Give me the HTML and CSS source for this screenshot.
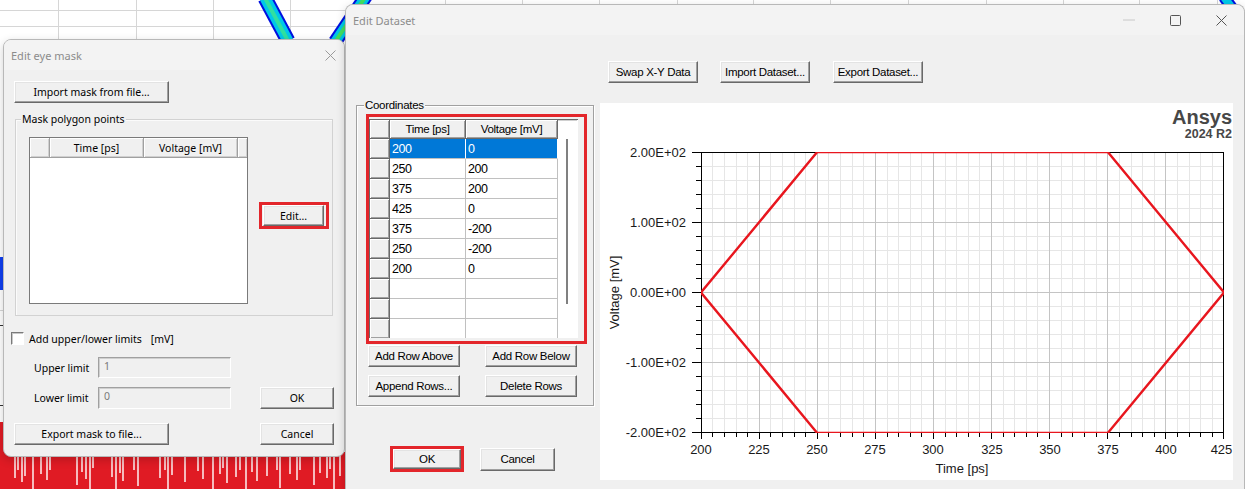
FILE: index.html
```html
<!DOCTYPE html>
<html>
<head>
<meta charset="utf-8">
<link rel="stylesheet" href="styles.css">
</head>
<body>
<svg class="desk" width="1245" height="489" viewBox="0 0 1245 489">
  <rect width="1245" height="489" fill="#ffffff"/>
  <g stroke="#d6d6d6" stroke-width="1">
    <path d="M58.5 0V489M136.5 0V489M213.5 0V489M290.5 0V489M368.5 0V489M445.5 0V489M522.5 0V489M599.5 0V489M677.5 0V489M753.5 0V489M830.5 0V489M908.5 0V489M986.5 0V489M1063.5 0V489M1139.5 0V489M1217.5 0V489"/>
    <path d="M0 10.5H1245M0 26.5H1245M0 310.5H10"/>
  </g>
  <path d="M0 325.5H4M0 405.5H4" stroke="#333" stroke-width="1"/>
  <rect x="0" y="257" width="4" height="33" fill="#1040f0"/>
  <g stroke-linecap="butt">
    <line x1="265" y1="-2" x2="288" y2="41" stroke="#0010e0" stroke-width="15"/>
    <line x1="265" y1="-2" x2="288" y2="41" stroke="#00c8e8" stroke-width="11"/>
    <line x1="265" y1="-2" x2="288" y2="41" stroke="#30e0a0" stroke-width="4"/>
    <line x1="335" y1="42" x2="366" y2="-4" stroke="#0010e0" stroke-width="14"/>
    <line x1="335" y1="42" x2="366" y2="-4" stroke="#00c8e8" stroke-width="10"/>
    <line x1="335" y1="42" x2="366" y2="-4" stroke="#40e060" stroke-width="4"/>
    <line x1="1224" y1="-3" x2="1232" y2="8" stroke="#0010e0" stroke-width="12"/>
    <line x1="1224" y1="-3" x2="1232" y2="8" stroke="#00c8e8" stroke-width="8"/>
  </g>
  <rect x="0" y="422" width="5" height="67" fill="#e01b24"/>
  <rect x="0" y="452" width="350" height="37" fill="#e01b24"/>
  <g stroke="#ffffff" stroke-width="1.4">
    <path d="M15 452V478M18 452V470M22 452V482M25 452V476M33 452V489M41 452V474M47 452V480M50 452V470M77 452V485M82 452V472M86 452V479M90 452V489M93 452V468M112 452V477M116 452V489M120 452V473M123 452V481M134 452V470M138 452V486M160 452V478M165 452V470M168 452V489M172 452V475M185 452V482M198 452V471M203 452V479M213 452V489M220 452V474M223 452V468M227 452V483M236 452V477M240 452V470M246 452V489M252 452V472M257 452V481M267 452V476M277 452V470M280 452V488M290 452V474M297 452V480M300 452V470M314 452V485M320 452V473M327 452V478M330 452V469M334 452V489M340 452V476"/>
  </g>
</svg>

<section class="win win-mask">
  <header class="titlebar">
    <span class="title">Edit eye mask</span>
    <svg class="close-x" width="11" height="11" viewBox="0 0 11 11"><path d="M0.5 0.5L10.5 10.5M10.5 0.5L0.5 10.5" stroke="#9a9a9a" stroke-width="1"/></svg>
  </header>
  <div class="mask-body">
    <button class="btn btn-import">Import mask from file...</button>
    <div class="group group-mask">
      <span class="group-label">Mask polygon points</span>
      <div class="mask-row">
        <div class="mask-table">
          <div class="mt-head">
            <span class="hc hc-corner"></span>
            <span class="hc hc-time">Time [ps]</span>
            <span class="hc hc-volt">Voltage [mV]</span>
            <span class="hc hc-blank"></span>
          </div>
        </div>
        <div class="redbox edit-box"><button class="btn btn-edit">Edit...</button></div>
      </div>
    </div>
    <div class="check-row">
      <span class="checkbox"></span>
      <span class="check-text">Add upper/lower limits</span>
      <span class="unit">[mV]</span>
    </div>
    <div class="limit-row limit-upper">
      <span class="lim-label">Upper limit</span>
      <span class="input">1</span>
    </div>
    <div class="limit-row limit-lower">
      <span class="lim-label">Lower limit</span>
      <span class="input">0</span>
      <button class="btn btn-ok">OK</button>
    </div>
    <div class="foot-row">
      <button class="btn btn-export">Export mask to file...</button>
      <button class="btn btn-cancel">Cancel</button>
    </div>
  </div>
</section>

<section class="win win-ds">
  <header class="titlebar">
    <span class="title">Edit Dataset</span>
    <div class="controls">
      <span class="ctl"><svg width="12" height="2" viewBox="0 0 12 2"><path d="M0 1H12" stroke="#c8c8c8" stroke-width="1"/></svg></span>
      <span class="ctl"><svg width="11" height="11" viewBox="0 0 11 11"><rect x="0.5" y="0.5" width="10" height="10" rx="1" fill="none" stroke="#555" stroke-width="1"/></svg></span>
      <span class="ctl"><svg width="11" height="11" viewBox="0 0 11 11"><path d="M0.5 0.5L10.5 10.5M10.5 0.5L0.5 10.5" stroke="#555" stroke-width="1"/></svg></span>
    </div>
  </header>
  <div class="ds-body">
    <div class="toolbar">
      <button class="btn dbtn btn-swap">Swap X-Y Data</button>
      <button class="btn dbtn btn-imp">Import Dataset...</button>
      <button class="btn dbtn btn-exp">Export Dataset...</button>
    </div>
    <div class="ds-main">
      <div class="ds-left">
        <div class="group group-coord">
          <span class="group-label">Coordinates</span>
          <div class="redbox table-box">
            <div class="grid">
              <span class="rh head"></span>
              <span class="ch">Time [ps]</span>
              <span class="ch">Voltage [mV]</span>
              <span class="scroll-col"></span>

              <span class="rh"></span><span class="cell sel">200</span><span class="cell sel">0</span>
              <span class="rh"></span><span class="cell">250</span><span class="cell">200</span>
              <span class="rh"></span><span class="cell">375</span><span class="cell">200</span>
              <span class="rh"></span><span class="cell">425</span><span class="cell">0</span>
              <span class="rh"></span><span class="cell">375</span><span class="cell">-200</span>
              <span class="rh"></span><span class="cell">250</span><span class="cell">-200</span>
              <span class="rh"></span><span class="cell">200</span><span class="cell">0</span>
              <span class="rh"></span><span class="cell"></span><span class="cell"></span>
              <span class="rh"></span><span class="cell"></span><span class="cell"></span>
              <span class="rh"></span><span class="cell"></span><span class="cell"></span>
            </div>
          </div>
          <div class="row-btns">
            <button class="btn dbtn rb-a">Add Row Above</button>
            <button class="btn dbtn rb-b">Add Row Below</button>
          </div>
          <div class="row-btns row-btns2">
            <button class="btn dbtn rb-a">Append Rows...</button>
            <button class="btn dbtn rb-b">Delete Rows</button>
          </div>
        </div>
        <div class="ok-row">
          <div class="redbox ok-box"><button class="btn dbtn btn-dok">OK</button></div>
          <button class="btn dbtn btn-dcancel">Cancel</button>
        </div>
      </div>
      <div class="chart">
        <svg width="633" height="377" viewBox="0 0 633 377" class="chart-svg">
          <defs>
            <clipPath id="plotclip"><rect x="101" y="49" width="523" height="281"/></clipPath>
          </defs>
          <path stroke="#e6e6e6" stroke-width="1" fill="none" d="M112.5 49V330M124.5 49V330M136.5 49V330M147.5 49V330M170.5 49V330M182.5 49V330M194.5 49V330M205.5 49V330M228.5 49V330M240.5 49V330M252.5 49V330M263.5 49V330M287.5 49V330M298.5 49V330M310.5 49V330M321.5 49V330M345.5 49V330M356.5 49V330M368.5 49V330M379.5 49V330M403.5 49V330M414.5 49V330M426.5 49V330M437.5 49V330M461.5 49V330M472.5 49V330M484.5 49V330M496.5 49V330M519.5 49V330M531.5 49V330M542.5 49V330M554.5 49V330M577.5 49V330M589.5 49V330M600.5 49V330M612.5 49V330M101 63.5H624M101 77.5H624M101 91.5H624M101 105.5H624M101 133.5H624M101 147.5H624M101 161.5H624M101 175.5H624M101 203.5H624M101 217.5H624M101 231.5H624M101 245.5H624M101 273.5H624M101 287.5H624M101 301.5H624M101 315.5H624"/>
          <path stroke="#c4c4c4" stroke-width="1" fill="none" d="M159.5 49V330M217.5 49V330M275.5 49V330M333.5 49V330M391.5 49V330M449.5 49V330M507.5 49V330M565.5 49V330M101 119.5H624M101 189.5H624M101 259.5H624"/>
          <rect x="101.5" y="49.5" width="522" height="280" fill="none" stroke="#000" stroke-width="1"/>
          <polyline clip-path="url(#plotclip)" fill="none" stroke="#e8161e" stroke-width="2.4" stroke-linejoin="miter" points="101,189.5 217.2,49 507.8,49 624,189.5 507.8,330 217.2,330 101,189.5"/>
          <path stroke="#000" stroke-width="1" fill="none" d="M96 63.5H101M96 77.5H101M96 91.5H101M96 105.5H101M96 133.5H101M96 147.5H101M96 161.5H101M96 175.5H101M96 203.5H101M96 217.5H101M96 231.5H101M96 245.5H101M96 273.5H101M96 287.5H101M96 301.5H101M96 315.5H101M92 49.5H101M92 119.5H101M92 189.5H101M92 259.5H101M92 329.5H101"/>
          <path stroke="#000" stroke-width="1" fill="none" d="M112.5 330V334M124.5 330V334M136.5 330V334M147.5 330V334M170.5 330V334M182.5 330V334M194.5 330V334M205.5 330V334M228.5 330V334M240.5 330V334M252.5 330V334M263.5 330V334M287.5 330V334M298.5 330V334M310.5 330V334M321.5 330V334M345.5 330V334M356.5 330V334M368.5 330V334M379.5 330V334M403.5 330V334M414.5 330V334M426.5 330V334M437.5 330V334M461.5 330V334M472.5 330V334M484.5 330V334M496.5 330V334M519.5 330V334M531.5 330V334M542.5 330V334M554.5 330V334M577.5 330V334M589.5 330V334M600.5 330V334M612.5 330V334M101.5 330V336M159.5 330V336M217.5 330V336M275.5 330V336M333.5 330V336M391.5 330V336M449.5 330V336M507.5 330V336M565.5 330V336M623.5 330V336"/>
          <g class="ax-text" text-anchor="end">
            <text x="86" y="54">2.00E+02</text>
            <text x="86" y="124">1.00E+02</text>
            <text x="86" y="194">0.00E+00</text>
            <text x="86" y="264">-1.00E+02</text>
            <text x="86" y="334">-2.00E+02</text>
          </g>
          <g class="ax-text" text-anchor="middle">
            <text x="101" y="351">200</text>
            <text x="159" y="351">225</text>
            <text x="217" y="351">250</text>
            <text x="275" y="351">275</text>
            <text x="333" y="351">300</text>
            <text x="392" y="351">325</text>
            <text x="450" y="351">350</text>
            <text x="508" y="351">375</text>
            <text x="566" y="351">400</text>
            <text x="621.5" y="351">425</text>
            <text x="362" y="370">Time [ps]</text>
            <text x="0" y="0" transform="translate(19 189.5) rotate(-90)">Voltage [mV]</text>
          </g>
          <text class="brand" x="632" y="21" text-anchor="end">Ansys</text>
          <text class="brand-sub" x="632" y="35" text-anchor="end">2024 R2</text>
        </svg>
      </div>
    </div>
  </div>
</section>
</body>
</html>
```

FILE: styles.css
```css
html, body {
  margin: 0;
  padding: 0;
}
body {
  width: 1245px;
  height: 489px;
  overflow: hidden;
  position: relative;
  background: #ffffff;
}
.desk {
  position: absolute;
  left: 0;
  top: 0;
  display: block;
}

/* windows */
.win {
  position: absolute;
  box-sizing: border-box;
  border: 1px solid #b8b8b8;
  border-radius: 8px;
  background: #f0f0f0;
  overflow: hidden;
  box-shadow: 0 3px 10px rgba(0, 0, 0, 0.18);
}
.win-mask {
  left: 3px;
  top: 39px;
  width: 342px;
  height: 418px;
  font-family: "Noto Sans", "Open Sans", sans-serif;
  font-size: 10.5px;
  color: #000;
}
.win-ds {
  left: 345px;
  top: 4px;
  width: 900px;
  height: 485px;
  border-bottom-width: 0;
  border-radius: 8px 8px 0 0;
  font-family: "Liberation Sans", Arial, sans-serif;
  font-size: 11.5px;
  letter-spacing: -0.3px;
  color: #000;
}
.titlebar {
  box-sizing: border-box;
  height: 30px;
  display: flex;
  align-items: center;
  justify-content: space-between;
  background: #f3f3f3;
  letter-spacing: 0;
}
.win-mask .titlebar {
  padding: 0 8px 0 7px;
}
.win-ds .titlebar {
  padding: 0 0 0 7px;
}
.title {
  font-family: "Noto Sans", "Open Sans", sans-serif;
  font-size: 11px;
  color: #8c8c8c;
}
.close-x {
  display: block;
}
.controls {
  display: flex;
  height: 30px;
}
.ctl {
  width: 46px;
  height: 30px;
  display: flex;
  align-items: center;
  justify-content: center;
}
.ctl svg {
  display: block;
}

/* buttons */
.btn {
  box-sizing: border-box;
  display: flex;
  align-items: center;
  justify-content: center;
  height: 22px;
  margin: 0;
  padding: 0;
  background: #f0f0f0;
  border: 1px solid;
  border-color: #ffffff #696969 #696969 #ffffff;
  box-shadow: inset -1px -1px 0 #a0a0a0, inset 1px 1px 0 #e3e3e3;
  font: inherit;
  letter-spacing: inherit;
  color: #000;
  white-space: nowrap;
}
.redbox {
  box-sizing: border-box;
  border: 3px solid #e3262b;
}

/* mask dialog */
.mask-body {
  display: flex;
  flex-direction: column;
}
.btn-import {
  margin: 11px 0 0 10px;
  width: 155px;
}
.group {
  box-sizing: border-box;
  border: 1px solid #d2d2d2;
  box-shadow: inset 1px 1px 0 #fbfbfb;
}
.group-label {
  display: block;
  width: fit-content;
  line-height: 15px;
  height: 15px;
  margin-top: -8px;
  padding: 0 1px;
  background: #f0f0f0;
}
.group-mask {
  margin: 16px 0 0 11px;
  width: 318px;
  height: 197px;
}
.group-mask .group-label {
  margin-left: 5px;
}
.mask-row {
  display: flex;
  align-items: flex-start;
  margin-top: 10px;
  padding-left: 13px;
}
.mask-table {
  box-sizing: border-box;
  width: 219px;
  height: 167px;
  border: 1px solid #7a7a7a;
  background: #ffffff;
}
.mt-head {
  display: flex;
  height: 20px;
}
.hc {
  box-sizing: border-box;
  height: 20px;
  display: flex;
  align-items: center;
  justify-content: center;
  background: #f0f0f0;
  border-right: 1px solid #a0a0a0;
  border-bottom: 1px solid #a0a0a0;
  box-shadow: inset 1px 1px 0 #ffffff, inset -1px -1px 0 #d0d0d0;
}
.hc-corner { width: 20px; }
.hc-time { width: 94px; }
.hc-volt { width: 94px; }
.hc-blank { width: 9px; border-right: none; }
.edit-box {
  margin: 65px 0 0 11px;
  width: 70px;
  height: 27px;
  padding: 0 2px 0 1px;
}
.btn-edit {
  width: 100%;
  height: 100%;
}
.check-row {
  display: flex;
  align-items: center;
  margin: 16px 0 0 7px;
  height: 13px;
}
.checkbox {
  box-sizing: border-box;
  width: 13px;
  height: 13px;
  background: #ffffff;
  border: 1px solid;
  border-color: #7a7a7a #ffffff #ffffff #7a7a7a;
  box-shadow: inset 1px 1px 0 #c8c8c8;
}
.check-text {
  margin-left: 5px;
}
.unit {
  margin-left: 9px;
}
.limit-row {
  display: flex;
  align-items: center;
  padding-left: 30px;
}
.limit-upper {
  margin-top: 12px;
  height: 21px;
}
.limit-lower {
  margin-top: 9px;
  height: 22px;
}
.lim-label {
  width: 64px;
}
.input {
  box-sizing: border-box;
  width: 133px;
  height: 100%;
  padding: 1px 0 0 5px;
  display: flex;
  align-items: flex-start;
  color: #7a7a7a;
  background: #f0f0f0;
  border: 1px solid;
  border-color: #a0a0a0 #ffffff #ffffff #a0a0a0;
  box-shadow: inset 1px 1px 0 #cfcfcf;
}
.btn-ok {
  margin-left: 29px;
  width: 74px;
}
.foot-row {
  display: flex;
  margin: 14px 0 0 10px;
}
.btn-export {
  width: 155px;
}
.btn-cancel {
  margin-left: 91px;
  width: 74px;
}

/* dataset dialog */
.ds-body {
  display: flex;
  flex-direction: column;
}
.toolbar {
  display: flex;
  margin-top: 26px;
  padding-left: 262px;
}
.dbtn {
  height: 22px;
}
.btn-swap { width: 90px; }
.btn-imp { width: 90px; margin-left: 22px; }
.btn-exp { width: 90px; margin-left: 23px; }
.ds-main {
  display: flex;
  align-items: flex-start;
  margin-top: 20px;
}
.ds-left {
  margin-left: 10px;
  width: 238px;
}
.group-coord {
  margin-top: 2px;
  height: 301px;
  border-color: #a0a0a0;
  box-shadow: inset 1px 1px 0 #ffffff, 1px 1px 0 #ffffff;
}
.group-coord .group-label {
  margin-left: 7px;
}
.table-box {
  margin: 1px 0 0 9px;
  width: 221px;
  height: 230px;
  padding: 2px 0 0 0;
}
.grid {
  box-sizing: border-box;
  width: 209px;
  height: 219px;
  overflow: hidden;
  display: grid;
  grid-template-columns: 20px 76px 92px 19px;
  grid-template-rows: 19px;
  grid-auto-rows: 20px;
  border-top: 1px solid #696969;
  border-left: 1px solid #696969;
  background: #ffffff;
}
.rh {
  box-sizing: border-box;
  background: #f0f0f0;
  border-right: 1px solid #696969;
  border-bottom: 1px solid #696969;
  box-shadow: inset 1px 1px 0 #ffffff, inset -1px -1px 0 #a0a0a0;
}
.ch {
  box-sizing: border-box;
  display: flex;
  align-items: center;
  justify-content: center;
  background: #f0f0f0;
  border-right: 1px solid #696969;
  border-bottom: 1px solid #696969;
  box-shadow: inset 1px 1px 0 #ffffff, inset -1px -1px 0 #a0a0a0;
}
.scroll-col {
  grid-column: 4;
  grid-row: 1 / span 11;
  background: linear-gradient(#808080, #808080) no-repeat 8px 18px / 2px 165px, #ffffff;
  border-top: 1px solid #d0d0d0;
}
.cell {
  box-sizing: border-box;
  display: flex;
  align-items: center;
  padding-left: 2px;
  font-size: 12.5px;
  letter-spacing: -0.4px;
  border-right: 1px solid #c0c0c0;
  border-bottom: 1px solid #c0c0c0;
  background: #ffffff;
}
.cell.sel {
  background: #0078d7;
  color: #ffffff;
  border-color: #ffffff;
  border-bottom-color: #c0c0c0;
}
.row-btns {
  display: flex;
  margin-top: 1px;
  padding-left: 11px;
}
.row-btns2 {
  margin-top: 8px;
}
.rb-a { width: 92px; }
.rb-b { width: 92px; margin-left: 25px; }
.ok-row {
  display: flex;
  align-items: center;
  margin-top: 40px;
  padding-left: 34px;
}
.ok-box {
  width: 74px;
  height: 26px;
  padding: 0 0 0 0;
}
.btn-dok {
  width: 100%;
  height: 100%;
}
.btn-dcancel {
  margin-left: 16px;
  width: 75px;
  height: 23px;
}
.chart {
  margin-left: 6px;
  width: 633px;
  height: 377px;
  background: #ffffff;
}
.chart-svg {
  display: block;
}
.ax-text {
  font-family: "Liberation Sans", Arial, sans-serif;
  font-size: 13px;
  letter-spacing: 0;
  fill: #1a1a1a;
}
.brand {
  font-family: "Liberation Sans", Arial, sans-serif;
  font-size: 20px;
  font-weight: bold;
  letter-spacing: 0;
  fill: #474747;
}
.brand-sub {
  font-family: "Liberation Sans", Arial, sans-serif;
  font-size: 12.5px;
  font-weight: bold;
  letter-spacing: 0;
  fill: #474747;
}
```
